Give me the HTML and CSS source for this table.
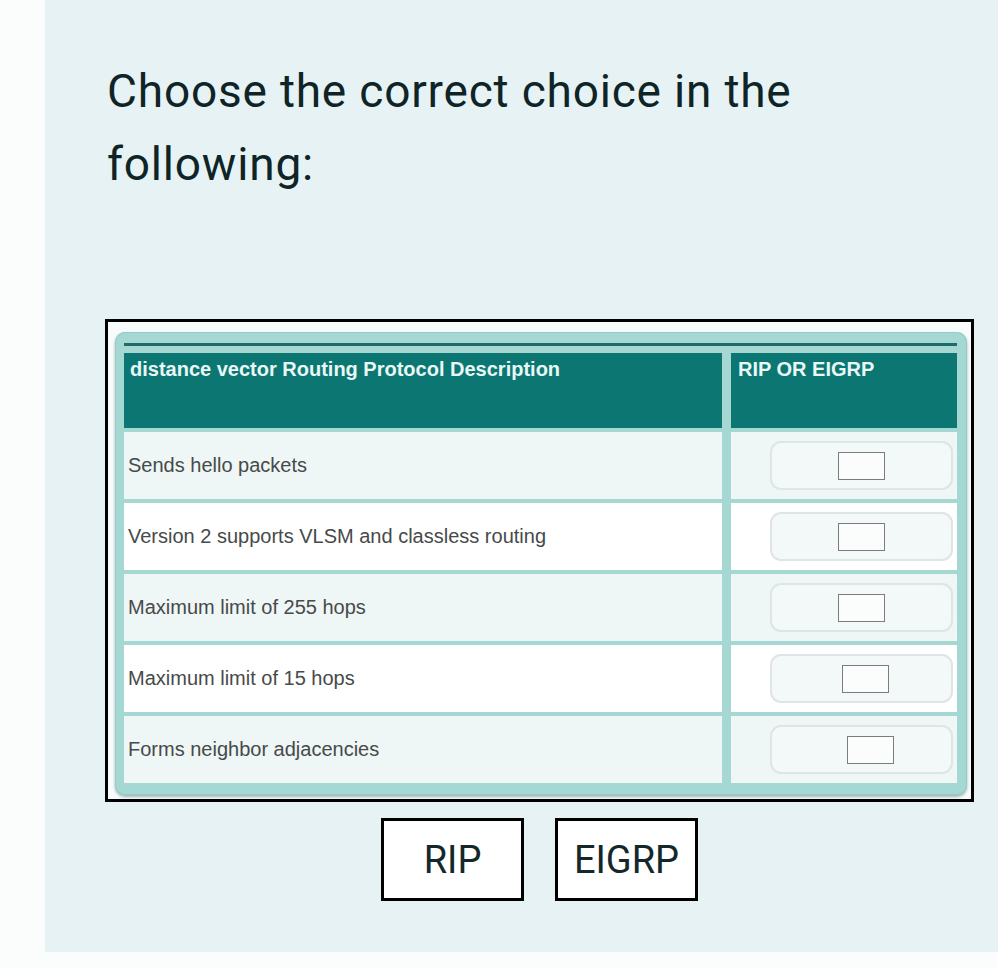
FILE: index.html
```html
<!DOCTYPE html>
<html>
<head>
<meta charset="utf-8">
<link rel="stylesheet" href="styles.css">
</head>
<body>
<div class="page">
  <h1 class="title">Choose the correct choice in the following:</h1>
  <div class="frame">
    <div class="panel">
      <div class="topline"></div>
      <div class="grid">
        <div class="hcell">distance vector Routing Protocol Description</div>
        <div class="hcell hcell-right">RIP OR EIGRP</div>

        <div class="cell odd">Sends hello packets</div>
        <div class="cell odd drop"><div class="slot"><div class="target off-a"></div></div></div>

        <div class="cell even">Version 2 supports VLSM and classless routing</div>
        <div class="cell even drop"><div class="slot"><div class="target off-a"></div></div></div>

        <div class="cell odd">Maximum limit of 255 hops</div>
        <div class="cell odd drop"><div class="slot"><div class="target off-a"></div></div></div>

        <div class="cell even">Maximum limit of 15 hops</div>
        <div class="cell even drop"><div class="slot"><div class="target off-b"></div></div></div>

        <div class="cell odd">Forms neighbor adjacencies</div>
        <div class="cell odd drop"><div class="slot"><div class="target off-c"></div></div></div>
      </div>
    </div>
  </div>
  <div class="choices">
    <div class="choice">RIP</div>
    <div class="choice">EIGRP</div>
  </div>
</div>
</body>
</html>
```

FILE: styles.css
```css
html, body {
  margin: 0;
  padding: 0;
  background: #fbfdfd;
}
.page {
  margin-left: 45px;
  height: 952px;
  box-sizing: border-box;
  padding: 55px 0 0 60px;
  background: #e6f2f4;
  font-family: Roboto, "Liberation Sans", sans-serif;
}
.title {
  margin: 0 0 0 2px;
  width: 820px;
  font-family: Roboto, sans-serif;
  font-weight: 400;
  font-size: 46px;
  letter-spacing: 0.8px;
  line-height: 73px;
  color: #0f2427;
}
.frame {
  margin-top: 118px;
  width: 852px;
  border: 3px solid #000;
  background: #f7fbfb;
  padding: 10px 4px 4px 7px;
  box-sizing: content-box;
}
.panel {
  width: 852px;
  box-sizing: border-box;
  padding: 11px 10px 12px 9px;
  background: #a5d7d3;
  border-radius: 10px;
  box-shadow: 0 2px 3px rgba(60, 90, 90, 0.45), inset 0 0 0 1px #96ccc8;
}
.topline {
  height: 3px;
  background: #1f6b67;
  margin-bottom: 7px;
}
.grid {
  display: grid;
  grid-template-columns: 598px 226px;
  grid-template-rows: 75px repeat(5, 67px);
  column-gap: 9px;
  row-gap: 4px;
  font-family: "Liberation Sans", Arial, sans-serif;
}
.hcell {
  background: #0c7772;
  color: #e9f8f6;
  font-weight: 700;
  font-size: 20px;
  line-height: 22px;
  padding: 5px 0 0 6px;
}
.hcell-right {
  padding-left: 7px;
}
.cell {
  display: flex;
  align-items: center;
  padding-left: 4px;
  font-size: 20px;
  color: #474a4a;
}
.odd {
  background: #eef6f6;
}
.even {
  background: #ffffff;
}
.drop {
  justify-content: flex-end;
  padding: 0 4px 0 0;
}
.slot {
  width: 183px;
  height: 49px;
  box-sizing: border-box;
  border: 2px solid #dfe4e4;
  border-radius: 11px;
  background: #f3f8f8;
  display: flex;
  align-items: center;
}
.target {
  width: 47px;
  height: 28px;
  box-sizing: border-box;
  border: 1px solid #7c7c7c;
  background: #fbfdfd;
}
.off-a { margin-left: 66px; }
.off-b { margin-left: 70px; }
.off-c { margin-left: 75px; }
.choices {
  width: 869px;
  margin-top: 16px;
  display: flex;
  justify-content: center;
  gap: 31px;
}
.choice {
  width: 143px;
  height: 83px;
  box-sizing: border-box;
  border: 3px solid #000;
  background: #fff;
  display: flex;
  align-items: center;
  justify-content: center;
  font-family: Roboto, sans-serif;
  font-size: 38px;
  color: #14282a;
}
```
